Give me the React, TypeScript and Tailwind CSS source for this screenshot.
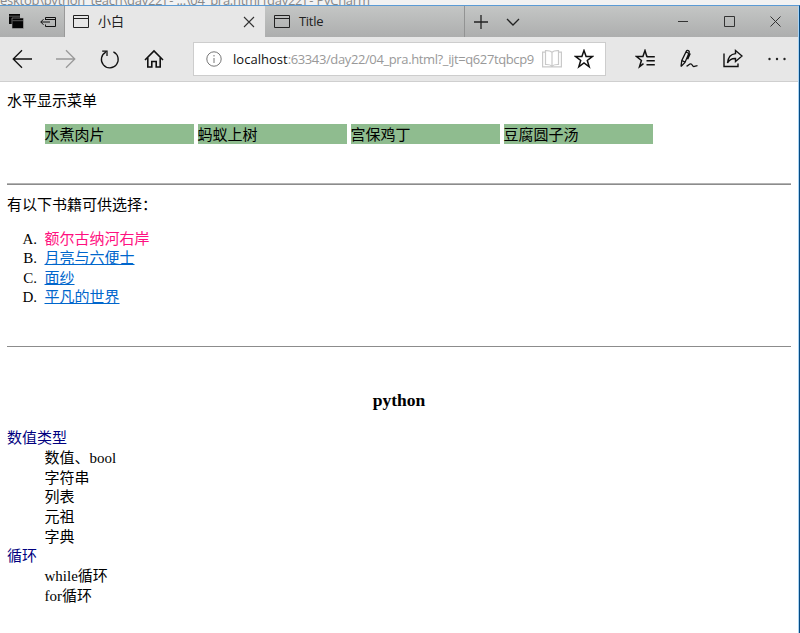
import type { ReactNode } from "react";

const dishes = ["水煮肉片", "蚂蚁上树", "宫保鸡丁", "豆腐圆子汤"];

const books = [
    { mark: "A.", name: "额尔古纳河右岸", active: true },
    { mark: "B.", name: "月亮与六便士", active: false },
    { mark: "C.", name: "面纱", active: false },
    { mark: "D.", name: "平凡的世界", active: false },
];

const topics = [
    { title: "数值类型", items: ["数值、bool", "字符串", "列表", "元祖", "字典"] },
    { title: "循环", items: ["while循环", "for循环"] },
];

function Icon({ size = 20, color = "#111", width = 1.3, children }: { size?: number; color?: string; width?: number; children: ReactNode }) {
    return (
        <svg width={size} height={size} viewBox={`0 0 ${size} ${size}`} fill="none" stroke={color} strokeWidth={width} className="shrink-0">
            {children}
        </svg>
    );
}

function Slot({ className, children }: { className: string; children: ReactNode }) {
    return <div className={`flex shrink-0 items-center justify-center ${className}`}>{children}</div>;
}

function PageIcon() {
    return (
        <svg width="16" height="14" viewBox="0 0 16 14" fill="none" stroke="#222" className="shrink-0">
            <path d="M.5.5h15v12H.5zM.5 3.5h15" />
        </svg>
    );
}

function TabBar() {
    return (
        <div className="flex h-[31px] bg-linear-to-b from-[#c4c6c5] to-[#adaeae] text-[13px] text-[#222]">
            <div className="flex w-[65px] shrink-0 items-center border-r border-[#999] pl-[9px]">
                <svg width="15" height="15" viewBox="0 0 15 15" className="shrink-0">
                    <path d="M0 0h11v10H0z" fill="#050505" />
                    <path d="M3 4h11.5v10.5H3z" fill="#050505" stroke="#aaa" strokeWidth=".6" />
                    <path d="M0 2.2h11M3.5 6.7h11" stroke="#999" strokeWidth=".6" />
                </svg>
                <svg width="17" height="12" viewBox="0 0 17 12" fill="none" stroke="#111" className="ml-4 shrink-0">
                    <path d="M5.500 4V1.500h10v9h-10V8.500M5.500 3.500h10M.8 6h9.200M3.500 3.200.8 6l2.700 2.800" />
                </svg>
            </div>
            <div className="flex w-[200px] shrink-0 items-center bg-[#e7e7e7] pl-2">
                <PageIcon />
                <span className="ml-[9px] flex-1">小白</span>
                <Slot className="mr-[10px] w-3">
                    <Icon size={12} color="#333" width={1.1}>
                        <path d="m1 1 10 10M11 1 1 11" />
                    </Icon>
                </Slot>
            </div>
            <div className="flex w-[200px] shrink-0 items-center border-r border-[#929393] pl-[9px]">
                <PageIcon />
                <span className="ml-[9px] tracking-[-0.3px]">Title</span>
            </div>
            <Slot className="w-8">
                <Icon size={14} color="#222">
                    <path d="M7 0v14M0 7h14" />
                </Icon>
            </Slot>
            <Slot className="w-8">
                <Icon size={14} color="#222" width={1.3}>
                    <path d="m1 4 6 6 6-6" />
                </Icon>
            </Slot>
            <div className="flex-1"></div>
            <Slot className="w-[46px]">
                <Icon size={10} color="#333" width={1}>
                    <path d="M0 4.500h10" />
                </Icon>
            </Slot>
            <Slot className="w-[46px]">
                <Icon size={11} color="#333" width={1}>
                    <path d="M.5.500h10v10H.5z" />
                </Icon>
            </Slot>
            <Slot className="w-[46px]">
                <Icon size={11} color="#333" width={1}>
                    <path d="m.5.500 10 10M10.500.500l-10 10" />
                </Icon>
            </Slot>
        </div>
    );
}

function AddressBar() {
    return (
        <div className="flex h-[45px] items-center border-b border-[#cfcfcf] bg-[#e7e7e7]">
            <Slot className="w-11">
                <Icon>
                    <path d="M1 10h19M10 1.200 1.200 10l8.800 8.800" />
                </Icon>
            </Slot>
            <Slot className="w-11">
                <Icon color="#999">
                    <path d="M0 10h19M10 1.200 18.800 10 10 18.800" />
                </Icon>
            </Slot>
            <Slot className="w-11">
                <Icon>
                    <path d="M5.800 3.100a8.400 8.400 0 1 0 7.600-.2M2.200 2.200h4.800v4.800" />
                </Icon>
            </Slot>
            <Slot className="w-11">
                <Icon width={1.6}>
                    <path d="m1 11 9-9 9 9M3.800 8.800V18h4v-5.500h4.400V18h4V8.800" />
                </Icon>
            </Slot>
            <div className="ml-[17px] flex h-[34px] w-[413px] shrink-0 items-center border border-[#cdcdcd] bg-white">
                <Slot className="ml-3 w-4">
                    <Icon size={16} color="#777" width={1}>
                        <circle cx="8" cy="8" r="7.200" />
                        <path d="M8 7v5M8 4v1.500" />
                    </Icon>
                </Slot>
                <span className="ml-[11px] mt-px w-[309px] whitespace-nowrap text-[13px] tracking-[-0.38px] text-[#999]">
                    <span className="tracking-[0.02px] text-[#111]">localhost</span>:63343/day22/04_pra.html?_ijt=q627tqbcp9
                </span>
                <Slot className="w-5">
                    <Icon color="#c9c9c9" width={1.2}>
                        <path d="M10 3.200C8.500 1.800 6 1.600 3.500 1.700V15.500c2.500-.1 5 .2 6.500 1.600 1.500-1.400 4-1.700 6.500-1.600V1.700C14 1.600 11.500 1.800 10 3.200zM10 3.200v14M3.500 3.200H.6v14.700h18.800V3.200h-2.900" />
                    </Icon>
                </Slot>
                <Slot className="ml-3 w-5">
                    <Icon width={1.5}>
                        <path d="m10 1.500 2.100 6.100h6.100l-4.900 3.900 1.900 6.300-5.200-3.800-5.200 3.800 1.900-6.300-4.900-3.900h6.100z" />
                    </Icon>
                </Slot>
            </div>
            <div className="ml-[17px] flex">
                <Slot className="w-11">
                    <Icon width={1.5}>
                        <path d="M13 7.500h-1.200L10 1.500l-2.100 6H1.500l4.900 4-1.900 6.200 4-3M12 7.700h7.800M11.500 11.700h8.300M11.500 15.700h8.300" />
                    </Icon>
                </Slot>
                <Slot className="w-11">
                    <Icon width={1.3}>
                        <path d="M2 17.500 2.800 11.500 7.300 2.200c.8-1.600 3.600-.6 2.900 1.300L6 13.500 2 17.500M2.800 11.500l3.400 1.600M7 3l4 2-2.300 5.200M7.500 17.200c1.600-.4 2.900-2.600 4.300-2.400 1.700.2 1.400 2.600 3 2.700 1.200.1 1.900-.8 3.700-.8" />
                    </Icon>
                </Slot>
                <Slot className="w-11">
                    <Icon width={1.4}>
                        <path d="M1 4.500v13h14V14.500M12.500 1.500 19 7l-6.500 5.500V9.500C9 9.300 6.500 10.500 4.500 14 5 8.500 8 5 12.500 4.600z" />
                    </Icon>
                </Slot>
                <Slot className="w-11">
                    <svg width="20" height="4" viewBox="0 0 20 4" fill="#222">
                        <circle cx="2.500" cy="2" r="1.200" />
                        <circle cx="10" cy="2" r="1.200" />
                        <circle cx="17.500" cy="2" r="1.200" />
                    </svg>
                </Slot>
            </div>
        </div>
    );
}

export default function App() {
    return (
        <div className="h-[633px] w-[800px] overflow-hidden bg-white font-['Open_Sans','Noto_Sans_CJK_SC',sans-serif]">
            <div className="h-[5px] overflow-hidden bg-[#f2f2f2]">
                <p className="-mt-[10px] whitespace-nowrap text-[13px] leading-5 tracking-[-0.26px] text-[#888]">
                    esktop\python_teach\day22] - ...\04_pra.html [day22] - PyCharm
                </p>
            </div>
            <div className="h-[628px] border-t border-r border-t-[#5b9bd5] border-r-[#064b83]">
                <div className="h-full border-r border-[#a9d4f5]">
                    <TabBar />
                    <AddressBar />
                    <div className="pr-[7px] pl-[7px] pt-[10px] font-['Liberation_Serif','Noto_Sans_CJK_SC',serif] text-[15px] leading-[19.65px] text-black">
                        <p>水平显示菜单</p>
                        <ul className="mt-[12.5px] flex gap-[3.5px] pl-[37.5px]">
                            {dishes.map((dish) => (
                                <li key={dish} className="h-5 w-[149.5px] shrink-0 bg-[#8fbc8f] leading-[23px]">{dish}</li>
                            ))}
                        </ul>
                        <hr className="mt-[39px] h-[2px] border-t border-b border-t-[#b4b4b4] border-b-[#8c8c8c]" />
                        <p className="mt-[10.5px]">有以下书籍可供选择：</p>
                        <ol className="mt-[14.5px] leading-[19.5px]">
                            {books.map((book) => (
                                <li key={book.name} className="flex">
                                    <span className="w-[30px] shrink-0 text-right">{book.mark}</span>
                                    <a className={book.active ? "ml-[7.5px] text-[#ff1080]" : "ml-[7.5px] text-[#0066cc] underline"}>{book.name}</a>
                                </li>
                            ))}
                        </ol>
                        <hr className="mt-[38.6px] border-[#8c8c8c]" />
                        <h3 className="mt-[44px] text-center text-[17.5px] font-bold">python</h3>
                        <dl className="mt-[18.3px]">
                            {topics.map((topic) => (
                                <div key={topic.title}>
                                    <dt className="text-[#000080]">{topic.title}</dt>
                                    {topic.items.map((item) => (
                                        <dd key={item} className="pl-[37.5px]">{item}</dd>
                                    ))}
                                </div>
                            ))}
                        </dl>
                    </div>
                </div>
            </div>
        </div>
    );
}
